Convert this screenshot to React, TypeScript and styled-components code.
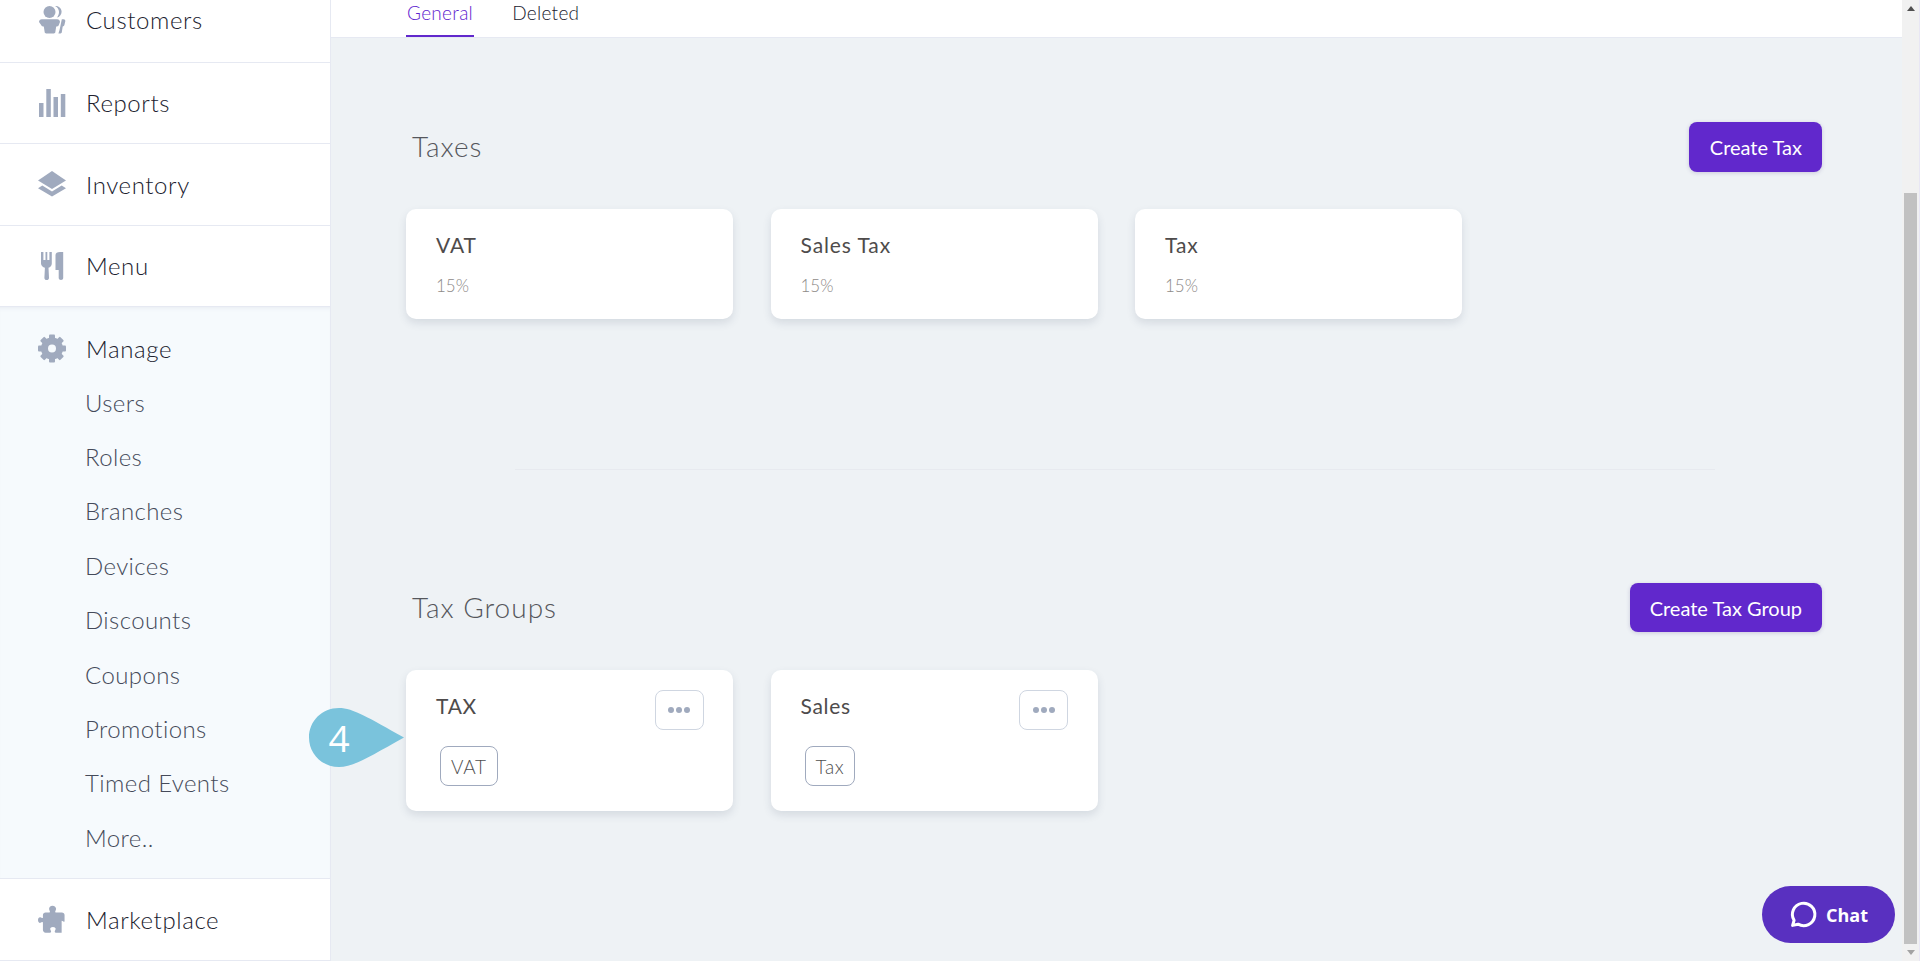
import React from 'react';
import styled, { createGlobalStyle } from 'styled-components';

const GlobalStyle = createGlobalStyle`
  html, body {
    margin: 0;
    padding: 0;
    background: #eef2f5;
  }
  * {
    box-sizing: border-box;
  }
`;

const CustomersIcon = () => (
  <svg width="28" height="30" viewBox="0 0 28 30" fill="#a0aabe">
    <circle cx="11.500" cy="7" r="6" />
    <path d="M17 1c3.600-.4 6.600 2.200 6.600 5.700 0 3-2 5.300-4.800 5.900 1.400-1.600 2.200-3.600 2.200-5.700 0-2.400-1.500-4.700-4-5.900z" />
    <path d="M1 17c0-1.600 1.200-2.800 2.800-2.800h15.400c1.600 0 2.800 1.200 2.800 2.800l-1.300 3.300c-.5 1-1.500 1.300-2.500 1.300l-.9 5.700c-.1.700-.7 1.200-1.400 1.200H8.100c-.7 0-1.300-.5-1.400-1.200l-.9-5.700c-1 0-2-.3-2.500-1.300z" />
    <path d="M23.800 14.200h1.700c1.200 0 2 .9 1.800 2l-.9 3.800c-.2.800-.9 1.400-1.700 1.400l-.9 5.900c-.1.700-.6 1.200-1.300 1.200h-2.100c1.500-4 2.200-8.600 3.400-14.300z" />
  </svg>
);

const ReportsIcon = () => (
  <svg width="28" height="28" viewBox="0 0 28 28" fill="#a0aabe">
    <rect x="1" y="14" width="4.500" height="14" />
    <rect x="8.300" y="0" width="4.500" height="28" />
    <rect x="15.500" y="8" width="4.500" height="20" />
    <rect x="22.800" y="5" width="4.500" height="23" />
  </svg>
);

const InventoryIcon = () => (
  <svg width="28" height="28" viewBox="0 0 28 28" fill="#a0aabe">
    <path d="M14 1 28 10.500 14 19 0 10.500z" />
    <path d="M4.300 15.500 14 21.500l9.700-6L28 18.300 14 26.500 0 18.300z" />
  </svg>
);

const MenuIcon = () => (
  <svg width="28" height="28" viewBox="0 0 28 28" fill="#a0aabe">
    <path d="M3 0h2.400v8h2.100V0h1.800v8h2.100V0H13.800v11.500c0 2.300-1.500 3.700-3.300 4.200l.5 10.100c.1 1.300-.9 2.200-2.300 2.200s-2.400-.9-2.300-2.200l.5-10.100C5 15.200 3 13.800 3 11.500z" />
    <path d="M17.500 3c0-1.700 1.700-3 4.500-3h3.200v26c0 1.200-.9 2-2.200 2s-2.300-.8-2.300-2v-8h-3.200z" />
  </svg>
);

const ManageIcon = () => (
  <svg width="29" height="29" viewBox="0 0 28 28" fill="#a0aabe">
    <circle cx="14" cy="14" r="7.500" fill="none" stroke="#a0aabe" strokeWidth="7" />
    {[0, 45, 90, 135, 180, 225, 270, 315].map((angle) => (
      <rect key={angle} x="11" y="0" width="6" height="6" rx="1" transform={`rotate(${angle} 14 14)`} />
    ))}
  </svg>
);

const MarketplaceIcon = () => (
  <svg width="29" height="29" viewBox="0 0 29 29" fill="#a0aabe">
    <path d="M15 .2c2.300 0 3.700 1.500 3.700 3.200 0 1.100-.6 2-.9 3-.1.500.2.800.7.800h6.300c1.500 0 2.700 1.200 2.700 2.700v6.300c0 .5-.4.800-.8.600-1-.4-1.700-.9-2.200-.9v12.200h-6.200c-.6 0-1-.4-1-.9 0-1.100 1-1.600 1-3 0-1.200-1.200-2-2.800-2s-2.900.8-2.900 2c0 1.400 1 1.900 1 3 0 .5-.4.900-1 .9H7.800c-1.500 0-2.700-1.200-2.700-2.700v-7.500c0-.5-.3-.8-.8-.7-1 .3-1.700.9-2.200.9C.9 18 0 16.800 0 15.100s.9-3 2.100-3c.5 0 1.200.6 2.200.9.500.1.800-.2.800-.7V9.900c0-1.500 1.200-2.700 2.700-2.700h3.900c.5 0 .8-.3.7-.8-.3-1-.9-1.900-.9-3 0-1.700 1.200-3.200 3.500-3.200z" />
  </svg>
);

const navTop = [
  { label: 'Customers', icon: <CustomersIcon />, clipped: true },
  { label: 'Reports', icon: <ReportsIcon /> },
  { label: 'Inventory', icon: <InventoryIcon /> },
  { label: 'Menu', icon: <MenuIcon /> },
];

const manageItems = ['Users', 'Roles', 'Branches', 'Devices', 'Discounts', 'Coupons', 'Promotions', 'Timed Events', 'More..'];

const taxes = [
  { name: 'VAT', rate: '15%' },
  { name: 'Sales Tax', rate: '15%' },
  { name: 'Tax', rate: '15%' },
];

const groups = [
  { name: 'TAX', tag: 'VAT' },
  { name: 'Sales', tag: 'Tax' },
];

const App = () => {
  return (
    <Page>
      <GlobalStyle />
      <Sidebar>
        {navTop.map((item) => (
          <NavRow key={item.label} $clipped={item.clipped}>
            <NavIcon>{item.icon}</NavIcon>
            <NavLabel>{item.label}</NavLabel>
          </NavRow>
        ))}
        <ManageSection>
          <ManageHead>
            <NavIcon>
              <ManageIcon />
            </NavIcon>
            <NavLabel>Manage</NavLabel>
          </ManageHead>
          {manageItems.map((item) => (
            <SubItem key={item}>{item}</SubItem>
          ))}
        </ManageSection>
        <NavRow>
          <NavIcon>
            <MarketplaceIcon />
          </NavIcon>
          <NavLabel>Marketplace</NavLabel>
        </NavRow>
      </Sidebar>

      <Main>
        <TabBar>
          <Tab $active>General</Tab>
          <Tab>Deleted</Tab>
        </TabBar>
        <Content>
          <SectionHead>
            <SectionTitle>Taxes</SectionTitle>
            <PrimaryButton>Create Tax</PrimaryButton>
          </SectionHead>
          <CardRow>
            {taxes.map((tax) => (
              <Card key={tax.name}>
                <CardTitle>{tax.name}</CardTitle>
                <CardRate>{tax.rate}</CardRate>
              </Card>
            ))}
          </CardRow>

          <Divider />

          <SectionHead $second>
            <SectionTitle>Tax Groups</SectionTitle>
            <PrimaryButton $short>Create Tax Group</PrimaryButton>
          </SectionHead>
          <CardRow>
            {groups.map((group) => (
              <GroupCard key={group.name}>
                <GroupHead>
                  <GroupTitle>{group.name}</GroupTitle>
                  <DotsButton>
                    <Dot />
                    <Dot />
                    <Dot />
                  </DotsButton>
                </GroupHead>
                <Tag>{group.tag}</Tag>
              </GroupCard>
            ))}
          </CardRow>
        </Content>
      </Main>

      <ScrollBar>
        <ArrowUp />
        <ScrollTrack>
          <ScrollThumb />
        </ScrollTrack>
        <ArrowDown />
      </ScrollBar>

      <Marker>
        <svg width="96" height="60" viewBox="0 0 96 60">
          <path d="M30 0C44 0 60 10 95 29.500 60 49 44 59 30 59 13 59 0 46 0 29.500S13 0 30 0z" fill="#7ac3dc" />
        </svg>
        <MarkerNumber>4</MarkerNumber>
      </Marker>

      <ChatButton>
        <svg width="29" height="29" viewBox="0 0 24 24" fill="none" stroke="#fff" strokeWidth="2.500" strokeLinecap="round" strokeLinejoin="round">
          <path d="M3 21l1.200-4.200A9.300 9.300 0 1 1 7.500 20z" />
        </svg>
        <ChatLabel>Chat</ChatLabel>
      </ChatButton>
    </Page>
  );
};

const Page = styled.div`
  position: relative;
  width: 1920px;
  height: 961px;
  display: flex;
  overflow: hidden;
  background: #eef2f5;
  font-family: Lato, 'Liberation Sans', sans-serif;
`;

const Sidebar = styled.aside`
  width: 331px;
  flex-shrink: 0;
  display: flex;
  flex-direction: column;
  background: #fff;
  border-right: 1px solid #e6e9f2;
`;

const NavRow = styled.div<{ $clipped?: boolean }>`
  height: ${(p) => (p.$clipped ? '62.5px' : '81.5px')};
  flex-shrink: 0;
  display: flex;
  align-items: center;
  padding: ${(p) => (p.$clipped ? '0 0 22px 38px' : '0 0 0 38px')};
  border-bottom: 1px solid #e6e9f2;
`;

const NavIcon = styled.span`
  width: 28px;
  height: 28px;
  margin-right: 20px;
  display: flex;
  align-items: center;
  justify-content: center;
`;

const NavLabel = styled.span`
  font-size: 24px;
  font-weight: 300;
  letter-spacing: 0.6px;
  color: #20212e;
`;

const ManageSection = styled.div`
  height: 572px;
  flex-shrink: 0;
  display: flex;
  flex-direction: column;
  padding-top: 14px;
  background: #f6fafd;
  border-bottom: 1px solid #e6e9f2;
  box-shadow: inset 0 4px 4px -3px rgba(60, 70, 100, 0.08);
`;

const ManageHead = styled.div`
  height: 54px;
  flex-shrink: 0;
  display: flex;
  align-items: center;
  padding-left: 38px;
`;

const SubItem = styled.div`
  height: 54.4px;
  flex-shrink: 0;
  display: flex;
  align-items: center;
  padding-left: 85px;
  font-size: 24px;
  font-weight: 300;
  letter-spacing: 0.4px;
  color: #454a5a;
`;

const Main = styled.main`
  flex: 1;
  min-width: 0;
  display: flex;
  flex-direction: column;
`;

const TabBar = styled.nav`
  height: 38px;
  flex-shrink: 0;
  display: flex;
  gap: 37px;
  padding-left: 75px;
  background: #fff;
  border-bottom: 1px solid #e6e9f2;
`;

const Tab = styled.div<{ $active?: boolean }>`
  height: 37px;
  padding: 0 1px;
  font-size: 19px;
  line-height: 26px;
  font-weight: 300;
  letter-spacing: 0.3px;
  color: ${(p) => (p.$active ? '#5f25cf' : '#20212e')};
  border-bottom: 2px solid ${(p) => (p.$active ? '#6128cc' : 'transparent')};
`;

const Content = styled.div`
  flex: 1;
  display: flex;
  flex-direction: column;
  padding: 0 80px 0 75px;
`;

const SectionHead = styled.div<{ $second?: boolean }>`
  display: flex;
  align-items: center;
  justify-content: space-between;
  margin-top: ${(p) => (p.$second ? '113px' : '84px')};
  margin-bottom: ${(p) => (p.$second ? '38px' : '37px')};
`;

const SectionTitle = styled.h2`
  margin: 0 0 2px 6px;
  font-size: 28px;
  font-weight: 300;
  letter-spacing: 1px;
  color: #55575c;
`;

const PrimaryButton = styled.button<{ $short?: boolean }>`
  height: ${(p) => (p.$short ? '49px' : '50px')};
  padding: 0 20px 0 ${(p) => (p.$short ? '20px' : '21px')};
  border: none;
  border-radius: 8px;
  background: #6128cc;
  color: #fff;
  font-family: inherit;
  font-size: 20px;
  font-weight: 400;
  box-shadow: 0 1px 4px rgba(60, 40, 120, 0.2);
`;

const CardRow = styled.div`
  display: flex;
  gap: 37.5px;
`;

const Card = styled.div`
  width: 327px;
  height: 110px;
  padding: 24px 30px;
  display: flex;
  flex-direction: column;
  background: #fff;
  border-radius: 10px;
  box-shadow: 0 4px 8px rgba(50, 60, 90, 0.13);
`;

const CardTitle = styled.div`
  font-size: 21px;
  line-height: 24px;
  font-weight: 400;
  letter-spacing: 0.9px;
  color: #4e4b4b;
`;

const CardRate = styled.div`
  margin-top: 19px;
  font-size: 17px;
  line-height: 20px;
  font-weight: 300;
  color: #8e8a88;
`;

const GroupCard = styled(Card)`
  height: 141px;
  padding: 20px 29.5px 0 30px;
`;

const GroupHead = styled.div`
  display: flex;
  justify-content: space-between;
  align-items: flex-start;
`;

const GroupTitle = styled.div`
  margin-top: 4px;
  font-size: 21px;
  line-height: 24px;
  font-weight: 400;
  letter-spacing: 0.7px;
  color: #4e4b4b;
`;

const DotsButton = styled.div`
  width: 49px;
  height: 40px;
  display: flex;
  align-items: center;
  justify-content: center;
  gap: 2px;
  border: 1px solid #cfd6e1;
  border-radius: 8px;
`;

const Dot = styled.span`
  width: 6px;
  height: 6px;
  border-radius: 50%;
  background: #a0aabe;
`;

const Tag = styled.div`
  align-self: flex-start;
  height: 40px;
  margin: 16px 0 0 4px;
  padding: 0 10px;
  display: flex;
  align-items: center;
  border: 1px solid #a0aabe;
  border-radius: 8px;
  font-size: 19px;
  font-weight: 300;
  letter-spacing: 0.7px;
  color: #4f4f4f;
`;

const Divider = styled.div`
  width: 1200px;
  height: 1px;
  margin: 150px 0 0 109px;
  background: #e7eaef;
`;

const ScrollBar = styled.div`
  width: 18px;
  flex-shrink: 0;
  display: flex;
  flex-direction: column;
  align-items: center;
  background: #f1f1f1;
  border-right: 1px solid #e8e6f4;
`;

const ArrowUp = styled.div`
  margin-top: 6px;
  width: 0;
  height: 0;
  border-left: 4px solid transparent;
  border-right: 4px solid transparent;
  border-bottom: 5px solid #505050;
`;

const ScrollTrack = styled.div`
  flex: 1;
  width: 100%;
  padding: 182px 1px 0 2px;
  display: flex;
`;

const ScrollThumb = styled.div`
  width: 13px;
  height: 751px;
  background: #c1c1c1;
`;

const ArrowDown = styled.div`
  margin-bottom: 6px;
  width: 0;
  height: 0;
  border-left: 4px solid transparent;
  border-right: 4px solid transparent;
  border-top: 5px solid #a3a3a3;
`;

const Marker = styled.div`
  position: absolute;
  left: 309px;
  top: 708px;
  width: 96px;
  height: 60px;
`;

const MarkerNumber = styled.span`
  position: absolute;
  left: 0;
  top: 0;
  width: 60px;
  height: 59px;
  display: flex;
  align-items: center;
  justify-content: center;
  font-family: 'Open Sans', sans-serif;
  font-size: 37px;
  color: #fff;
`;

const ChatButton = styled.div`
  position: absolute;
  left: 1762px;
  top: 886px;
  width: 133px;
  height: 57px;
  display: flex;
  align-items: center;
  justify-content: center;
  gap: 8px;
  border-radius: 29px;
  background: #5930c0;
`;

const ChatLabel = styled.span`
  font-family: 'Open Sans', sans-serif;
  font-size: 18px;
  font-weight: 700;
  color: #fff;
`;

export default App;
